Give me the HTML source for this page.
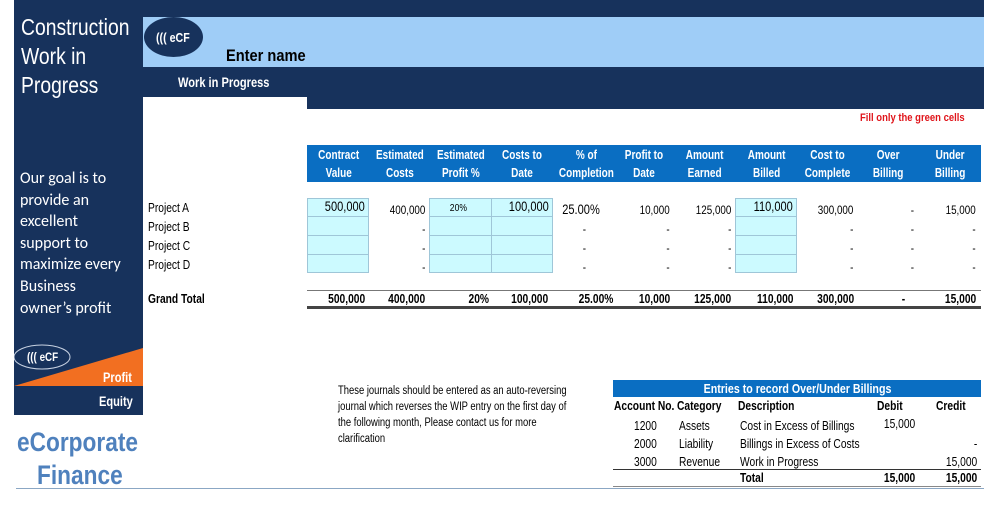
<!DOCTYPE html>
<html><head><meta charset="utf-8"><style>
*{margin:0;padding:0;box-sizing:border-box}
body{width:984px;height:509px;background:#fff;position:relative;overflow:hidden;font-family:"Liberation Sans",sans-serif}
.a{position:absolute}
.L{transform:scaleX(.82);transform-origin:left top;white-space:nowrap}
.hd{position:absolute;top:145px;height:37px;color:#fff;font-size:12.5px;font-weight:bold;text-align:center;line-height:18px;padding-top:1px;white-space:nowrap}
.hd span{display:inline-block;transform:scaleX(.8)}
.c{position:absolute;font-size:11.5px;text-align:right;color:#000;transform:scaleX(.82);transform-origin:right top;white-space:nowrap}
.g{position:absolute;background:#ccfaff;border:1px solid #9fc6d8}
</style></head><body>
<div class="a" style="left:14px;top:0;width:970px;height:17px;background:#17325c"></div>
<div class="a" style="left:14px;top:0;width:129px;height:415px;background:#17325c"></div>
<div class="a L" style="left:21px;top:13px;color:#fff;font-size:23px;line-height:29px;transform:scaleX(.84)">Construction<br>Work in<br>Progress</div>
<div class="a" style="left:20px;top:168px;color:#fff;font-family:Carlito,'Liberation Sans',sans-serif;font-size:16px;line-height:21.6px">Our goal is to<br>provide an<br>excellent<br>support to<br>maximize every<br>Business<br>owner’s profit</div>
<svg class="a" style="left:14px;top:338px" width="129" height="50"><polygon points="0,48 129,10 129,48" fill="#f26f21"/><ellipse cx="28" cy="19" rx="28" ry="12" fill="none" stroke="#c8d2e2" stroke-width="1"/></svg>
<div class="a L" style="left:27px;top:350px;color:#fff;font-size:12px;font-weight:bold">((( eCF</div>
<div class="a L" style="left:103px;top:370px;color:#fff;font-size:13.5px;font-weight:bold">Profit</div>
<div class="a L" style="left:99px;top:394px;color:#fff;font-size:13.5px;font-weight:bold">Equity</div>
<div class="a L" style="left:17px;top:426px;color:#4f81bd;font-size:27px;font-weight:bold;line-height:32px;transform:scaleX(.84)">eCorporate</div>
<div class="a L" style="left:37px;top:459px;color:#4f81bd;font-size:27px;font-weight:bold;line-height:32px;transform:scaleX(.84)">Finance</div>
<div class="a" style="left:16px;top:488px;width:968px;height:1px;background:#8ba7c4"></div>

<div class="a" style="left:143px;top:17px;width:841px;height:50px;background:#9fcdf7"></div>
<div class="a" style="left:144px;top:17px;width:59px;height:40px;border-radius:50%;background:#17325c"></div>
<div class="a L" style="left:156px;top:30px;color:#fff;font-size:13px;font-weight:bold">((( eCF</div>
<div class="a L" style="left:226px;top:46px;color:#000;font-size:17px;font-weight:bold;transform:scaleX(.86)">Enter name</div>
<div class="a" style="left:143px;top:67px;width:841px;height:30px;background:#17325c"></div>
<div class="a" style="left:307px;top:97px;width:677px;height:12px;background:#17325c"></div>
<div class="a L" style="left:178px;top:75px;color:#fff;font-size:13.5px;font-weight:bold">Work in Progress</div>
<div class="a L" style="left:860px;top:112px;color:#e0151b;font-size:11px;font-weight:bold;transform:scaleX(.86)">Fill only the green cells</div>

<div class="a" style="left:307px;top:145px;width:674px;height:37px;background:#0a6ec2"></div>
<div class="hd" style="left:308px;width:61px"><span>Contract<br>Value</span></div>
<div class="hd" style="left:370px;width:60px"><span>Estimated<br>Costs</span></div>
<div class="hd" style="left:430px;width:61px"><span>Estimated<br>Profit %</span></div>
<div class="hd" style="left:491px;width:61px"><span>Costs to<br>Date</span></div>
<div class="hd" style="left:552px;width:61px"><span>% of<br>Completion</span></div>
<div class="hd" style="left:613px;width:61px"><span>Profit to<br>Date</span></div>
<div class="hd" style="left:674px;width:61px"><span>Amount<br>Earned</span></div>
<div class="hd" style="left:736px;width:61px"><span>Amount<br>Billed</span></div>
<div class="hd" style="left:797px;width:61px"><span>Cost to<br>Complete</span></div>
<div class="hd" style="left:858px;width:61px"><span>Over<br>Billing</span></div>
<div class="hd" style="left:919px;width:62px"><span>Under<br>Billing</span></div>

<div class="g" style="left:307px;top:198px;width:62px;height:75px"></div>
<div class="g" style="left:429px;top:198px;width:124px;height:75px"></div>
<div class="g" style="left:735px;top:198px;width:62px;height:75px"></div>
<div class="a" style="left:307px;top:216px;width:62px;height:1px;background:#9fc6d8;box-shadow:0 19px #9fc6d8,0 38px #9fc6d8"></div>
<div class="a" style="left:429px;top:216px;width:124px;height:1px;background:#9fc6d8;box-shadow:0 19px #9fc6d8,0 38px #9fc6d8"></div>
<div class="a" style="left:735px;top:216px;width:62px;height:1px;background:#9fc6d8;box-shadow:0 19px #9fc6d8,0 38px #9fc6d8"></div>
<div class="a" style="left:491px;top:198px;width:1px;height:75px;background:#9fc6d8"></div>

<div class="a L" style="left:148px;top:199px;font-size:12.5px;line-height:19px">Project A<br>Project B<br>Project C<br>Project D</div>
<div class="a L" style="left:148px;top:292px;font-size:12.5px;font-weight:bold">Grand Total</div>

<div class="c" style="right:619px;top:199px;font-size:13.5px">500,000</div>
<div class="c" style="right:559px;top:201px;font-size:12px;line-height:19px">400,000<br>-<br>-<br>-</div>
<div class="c" style="right:517px;top:202px;font-size:10.5px">20%</div>
<div class="c" style="right:435px;top:199px;font-size:13.5px">100,000</div>
<div class="c" style="right:384px;top:200px;font-size:13.5px;line-height:19px">25.00%</div>
<div class="c" style="right:398px;top:220px;font-size:12px;line-height:19px">-<br>-<br>-</div>
<div class="c" style="right:314px;top:201px;font-size:12px;line-height:19px">10,000<br>-<br>-<br>-</div>
<div class="c" style="right:253px;top:201px;font-size:12px;line-height:19px">125,000<br>-<br>-<br>-</div>
<div class="c" style="right:191px;top:199px;font-size:13.5px">110,000</div>
<div class="c" style="right:131px;top:201px;font-size:12px;line-height:19px">300,000<br>-<br>-<br>-</div>
<div class="c" style="right:70px;top:201px;font-size:12px;line-height:19px">-<br>-<br>-<br>-</div>
<div class="c" style="right:8px;top:201px;font-size:12px;line-height:19px">15,000<br>-<br>-<br>-</div>

<div class="a" style="left:307px;top:290px;width:674px;height:1px;background:#777"></div>
<div class="a" style="left:307px;top:306px;width:674px;height:3px;background:#444"></div>
<div class="c" style="right:619px;top:292px;font-weight:bold;font-size:12.5px">500,000</div>
<div class="c" style="right:559px;top:292px;font-weight:bold;font-size:12.5px">400,000</div>
<div class="c" style="right:495px;top:292px;font-weight:bold;font-size:12.5px">20%</div>
<div class="c" style="right:436px;top:292px;font-weight:bold;font-size:12.5px">100,000</div>
<div class="c" style="right:371px;top:292px;font-weight:bold;font-size:12.5px">25.00%</div>
<div class="c" style="right:314px;top:292px;font-weight:bold;font-size:12.5px">10,000</div>
<div class="c" style="right:253px;top:292px;font-weight:bold;font-size:12.5px">125,000</div>
<div class="c" style="right:191px;top:292px;font-weight:bold;font-size:12.5px">110,000</div>
<div class="c" style="right:130px;top:292px;font-weight:bold;font-size:12.5px">300,000</div>
<div class="c" style="right:79px;top:292px;font-weight:bold;font-size:12.5px">-</div>
<div class="c" style="right:8px;top:292px;font-weight:bold;font-size:12.5px">15,000</div>

<div class="a L" style="left:338px;top:383px;font-size:11.5px;line-height:16px">These journals should be entered as an auto-reversing<br>journal which reverses the WIP entry on the first day of<br>the following month, Please contact us for more<br>clarification</div>

<div class="a" style="left:613px;top:380px;width:368px;height:17px;background:#0a6ec2;color:#fff;font-size:13px;font-weight:bold;text-align:center;line-height:17px"><span style="display:inline-block;transform:scaleX(.82)">Entries to record Over/Under Billings</span></div>
<div class="a L" style="left:614px;top:399px;font-size:12.5px;font-weight:bold">Account No.</div>
<div class="a L" style="left:677px;top:399px;font-size:12.5px;font-weight:bold">Category</div>
<div class="a L" style="left:738px;top:399px;font-size:12.5px;font-weight:bold">Description</div>
<div class="a L" style="left:877px;top:399px;font-size:12.5px;font-weight:bold">Debit</div>
<div class="a L" style="left:936px;top:399px;font-size:12.5px;font-weight:bold">Credit</div>
<div class="a L" style="left:634px;top:417px;font-size:12.5px;line-height:18px">1200<br>2000<br>3000</div>
<div class="a L" style="left:679px;top:417px;font-size:12.5px;line-height:18px">Assets<br>Liability<br>Revenue</div>
<div class="a L" style="left:740px;top:417px;font-size:12.5px;line-height:18px">Cost in Excess of Billings<br>Billings in Excess of Costs<br>Work in Progress</div>
<div class="c" style="right:69px;top:417px;font-size:12.5px">15,000</div>
<div class="c" style="right:7px;top:417px;font-size:12.5px;line-height:18px">&nbsp;<br>-<br>15,000</div>
<div class="a" style="left:613px;top:469px;width:368px;height:1px;background:#333"></div>
<div class="a L" style="left:740px;top:471px;font-size:12.5px;font-weight:bold">Total</div>
<div class="c" style="right:69px;top:471px;font-size:12.5px;font-weight:bold">15,000</div>
<div class="c" style="right:7px;top:471px;font-size:12.5px;font-weight:bold">15,000</div>
<div class="a" style="left:613px;top:486px;width:368px;height:1px;background:#888"></div>
</body></html>
